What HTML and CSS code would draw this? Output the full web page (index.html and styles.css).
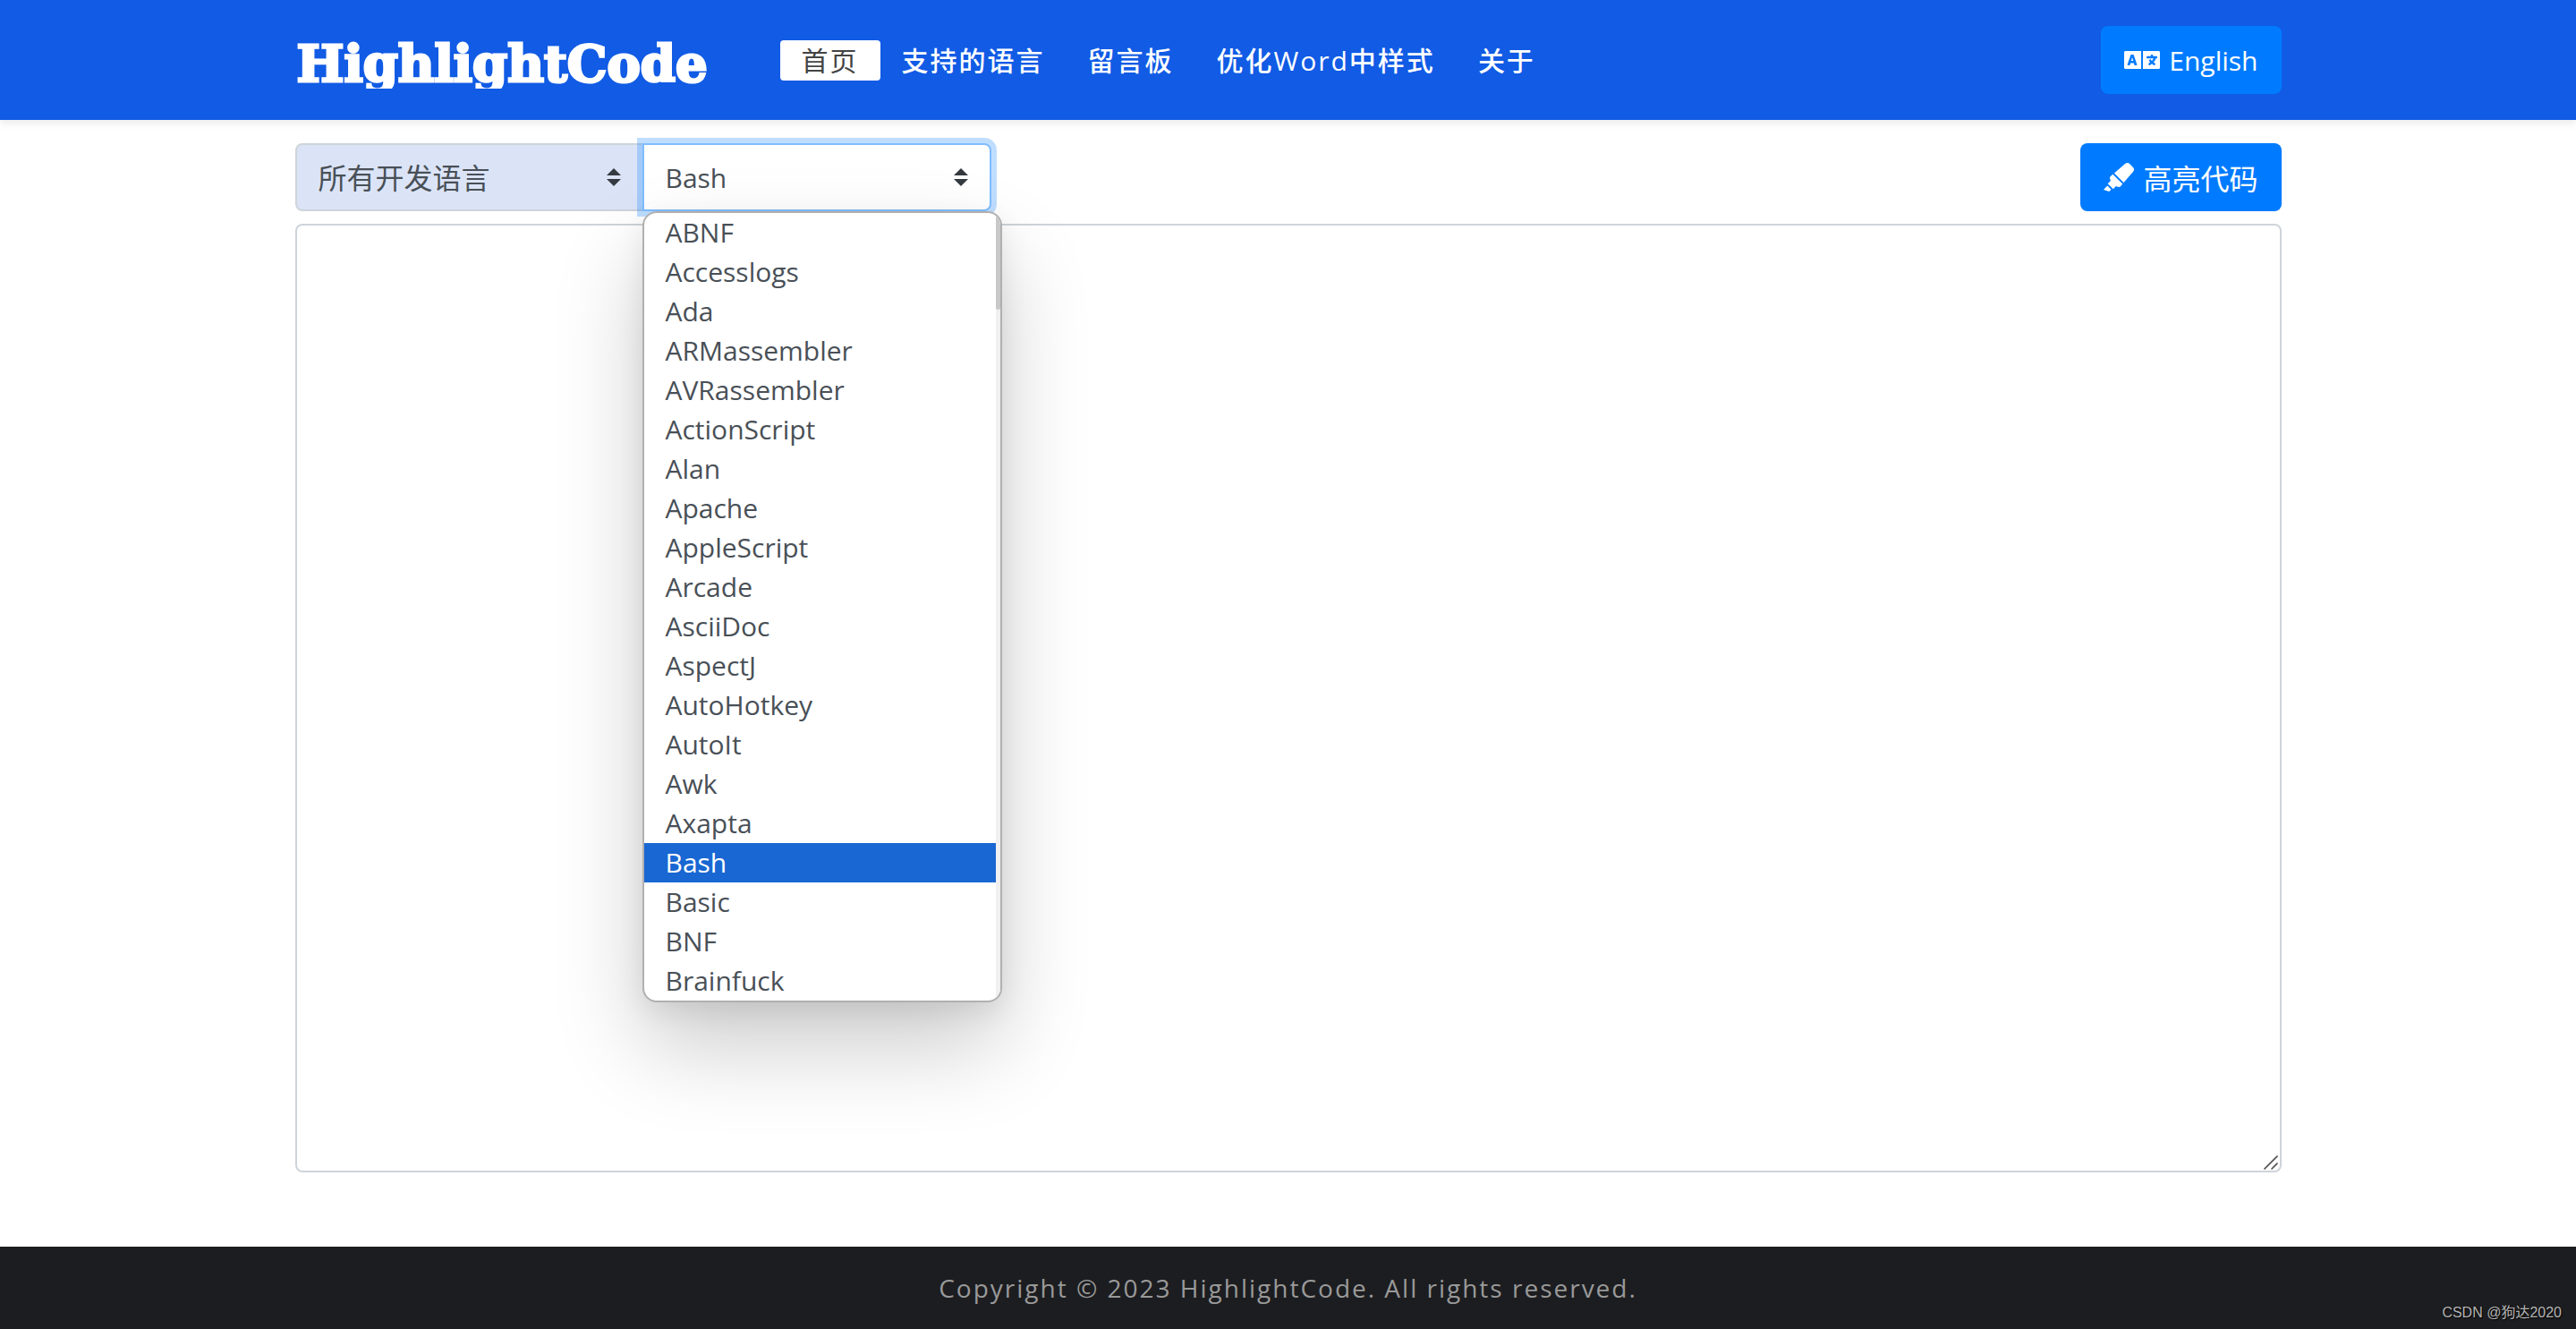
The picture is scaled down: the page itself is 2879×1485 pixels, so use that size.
FILE: index.html
```html
<!DOCTYPE html>
<html lang="zh-CN">
<head>
    <meta charset="UTF-8">
    <meta name="viewport" content="width=device-width, initial-scale=1.0">
    <title>HighlightCode</title>
    <link rel="stylesheet" href="styles.css">
</head>
<body>
    <header class="header">
        <div class="container header-inner">
            <a class="brand" href="#">HighlightCode</a>
            <nav class="nav">
                <a class="nav-link active" href="#">首页</a>
                <a class="nav-link" href="#">支持的语言</a>
                <a class="nav-link" href="#">留言板</a>
                <a class="nav-link" href="#">优化Word中样式</a>
                <a class="nav-link" href="#">关于</a>
            </nav>
            <button class="btn btn-language" type="button">
                <svg class="icon-language" viewBox="0 0 640 512" aria-hidden="true"><path fill="currentColor" d="M152.1 236.2c-3.5-12.1-7.8-33.2-7.8-33.2h-.5s-4.3 21.1-7.8 33.2l-11.1 37.5H163zM616 96H336v320h280c13.3 0 24-10.7 24-24V120c0-13.3-10.7-24-24-24zm-24 120c0 6.6-5.4 12-12 12h-11.4c-6.9 23.6-21.7 47.4-42.7 69.9 8.4 6.4 17.1 12.5 26.1 18 5.5 3.4 7.3 10.5 4.1 16.2l-7.9 13.9c-3.4 5.9-10.9 7.8-16.7 4.3-12.6-7.8-24.5-16.1-35.4-24.9-10.9 8.7-22.7 17.1-35.4 24.9-5.8 3.5-13.3 1.6-16.7-4.3l-7.9-13.9c-3.2-5.6-1.4-12.8 4.2-16.2 9.3-5.7 18-11.7 26.1-18-7.9-8.4-14.9-17-21-25.7-4-5.7-2.2-13.6 3.7-17.1l6.5-3.9 7.3-4.3c5.4-3.2 12.4-1.7 16 3.4 5 7 10.8 14 17.4 20.9 13.5-14.2 23.8-28.9 30-43.2H412c-6.6 0-12-5.4-12-12v-16c0-6.6 5.4-12 12-12h64v-16c0-6.6 5.4-12 12-12h16c6.6 0 12 5.4 12 12v16h64c6.6 0 12 5.4 12 12zM0 120v272c0 13.3 10.7 24 24 24h280V96H24c-13.3 0-24 10.7-24 24zm58.9 216.1L116.4 167c1.7-4.9 6.2-8.1 11.4-8.1h32.5c5.1 0 9.7 3.3 11.4 8.1l57.5 169.1c2.6 7.8-3.1 15.9-11.4 15.9h-22.9a12 12 0 0 1-11.5-8.6l-9.4-31.9h-60.2l-9.1 31.8c-1.5 5.1-6.2 8.7-11.5 8.7H70.3c-8.2 0-14-8.1-11.4-15.9z"/></svg>
                English
            </button>
        </div>
    </header>

    <main class="container main">
        <div class="toolbar">
            <div class="select-group">
                <select class="custom-select group-select" aria-label="语言分类">
                    <option>所有开发语言</option>
                </select>
                <div class="language">
                    <select class="custom-select language-select focus" aria-label="开发语言">
                        <option>Bash</option>
                    </select>
                    <div class="dropdown">
                        <ul class="option-list" role="listbox" aria-label="开发语言">
                            <li role="option">ABNF</li>
                            <li role="option">Accesslogs</li>
                            <li role="option">Ada</li>
                            <li role="option">ARMassembler</li>
                            <li role="option">AVRassembler</li>
                            <li role="option">ActionScript</li>
                            <li role="option">Alan</li>
                            <li role="option">Apache</li>
                            <li role="option">AppleScript</li>
                            <li role="option">Arcade</li>
                            <li role="option">AsciiDoc</li>
                            <li role="option">AspectJ</li>
                            <li role="option">AutoHotkey</li>
                            <li role="option">AutoIt</li>
                            <li role="option">Awk</li>
                            <li role="option">Axapta</li>
                            <li role="option" class="selected" aria-selected="true">Bash</li>
                            <li role="option">Basic</li>
                            <li role="option">BNF</li>
                            <li role="option">Brainfuck</li>
                        </ul>
                        <div class="scrollbar"><div class="thumb"></div></div>
                    </div>
                </div>
            </div>
            <button class="btn" type="button">
                <svg class="icon-highlighter" viewBox="0 0 544 512" aria-hidden="true"><path fill="currentColor" d="M0 479.98L99.92 512l35.45-35.45-67.04-67.04L0 479.98zm124.61-240.01a36.592 36.592 0 0 0-10.79 38.1l13.05 42.83-50.93 50.94 96.23 96.23 50.86-50.86 42.74 13.08c13.73 4.2 28.65-.01 38.15-10.78l35.55-41.64-173.34-173.34-41.52 35.44zm403.31-160.7l-63.2-63.2c-20.49-20.49-53.38-21.52-75.12-2.35L190.55 183.68l169.77 169.78L530.27 154.4c19.18-21.74 18.15-54.63-2.35-75.13z"/></svg>
                高亮代码
            </button>
        </div>
        <div class="editor">
            <textarea class="code" aria-label="代码"></textarea>
            <svg class="grip" viewBox="0 0 16 16" aria-hidden="true"><path d="M0.5 15.5L15.5 0.5M8.5 15.5L15.5 8.5" stroke="#555" stroke-width="1.6" fill="none"/></svg>
        </div>
    </main>

    <footer class="footer">
        <p class="copyright">Copyright © 2023 HighlightCode. All rights reserved.</p>
        <span class="watermark">CSDN @狗达2020</span>
    </footer>
</body>
</html>
```

FILE: styles.css
```css
* {
    box-sizing: border-box;
}

body {
    margin: 0;
    min-height: 100vh;
    display: flex;
    flex-direction: column;
    background: #fff;
    color: #495057;
    font-family: "Open Sans", "Noto Sans CJK SC", sans-serif;
    font-size: 30px;
    line-height: 44px;
}

.container {
    width: 100%;
    max-width: 2220px;
    margin: 0 auto;
}

/* header */
.header {
    background: #115be5;
    box-shadow: 0 4px 8px rgba(0, 0, 0, 0.08);
}

.header-inner {
    display: flex;
    align-items: center;
    padding: 29px 0;
}

.brand {
    width: 542px;
    height: 64px;
    padding-left: 2px;
    overflow: hidden;
    color: #fff;
    font-family: "DejaVu Serif", serif;
    font-size: 56px;
    font-weight: bold;
    line-height: 72px;
    text-decoration: none;
    -webkit-text-stroke: 3px #fff;
}

.nav {
    display: flex;
    flex: 1;
}

.nav-link {
    padding: 0 24px;
    border-radius: 4px;
    color: #fff;
    font-weight: 500;
    line-height: 45px;
    letter-spacing: 2px;
    text-decoration: none;
    white-space: nowrap;
}

.nav-link.active {
    background: #fff;
    color: #444;
    font-weight: 400;
}

.btn {
    display: flex;
    align-items: center;
    gap: 10px;
    height: 76px;
    padding: 0 26px;
    border: 0;
    border-radius: 8px;
    background: #007bff;
    color: #fff;
    font-family: inherit;
    font-size: 32px;
    white-space: nowrap;
}

.btn-language {
    font-size: 30px;
}

.icon-language {
    width: 40px;
    height: 32px;
}

.icon-highlighter {
    width: 34px;
    height: 32px;
}

/* content */
.main {
    flex: 1;
    display: flex;
    flex-direction: column;
    gap: 14px;
    padding: 26px 0 83px;
}

.toolbar {
    display: flex;
    justify-content: space-between;
}

.select-group {
    display: flex;
}

.custom-select {
    display: block;
    appearance: none;
    width: 390px;
    height: 76px;
    padding: 0 56px 0 24px;
    border: 2px solid #ced4da;
    color: #495057;
    font-family: inherit;
    font-size: 32px;
    outline: none;
    background: #fff url("data:image/svg+xml,%3csvg xmlns='http://www.w3.org/2000/svg' viewBox='0 0 4 5'%3e%3cpath fill='%23343a40' d='M2 0L0 2h4zm0 5L0 3h4z'/%3e%3c/svg%3e") no-repeat right 24px center / 16px 20px;
}

.group-select {
    border-radius: 8px 0 0 8px;
    background-color: #dbe4f7;
}

.language {
    position: relative;
    margin-left: -2px;
}

.language-select {
    border-radius: 0 8px 8px 0;
    font-size: 30px;
}

.custom-select.focus {
    border-color: #80bdff;
    box-shadow: 0 0 0 6px rgba(0, 123, 255, 0.25);
}

.dropdown {
    position: absolute;
    z-index: 10;
    top: 100%;
    left: 0;
    display: flex;
    width: 402px;
    border: 2px solid #b0b0b0;
    border-radius: 16px;
    overflow: hidden;
    background: #fff;
    box-shadow: 0 50px 100px rgba(0, 0, 0, 0.2), 0 10px 30px rgba(0, 0, 0, 0.08);
}

.option-list {
    flex: 1;
    margin: 0;
    padding: 0;
    list-style: none;
}

.option-list li {
    padding: 0 24px;
    cursor: default;
}

.option-list .selected {
    background: #1967d2;
    color: #fff;
}

.scrollbar {
    width: 5px;
    background: #f0f0f0;
}

.thumb {
    height: 108px;
    border-radius: 0 0 3px 3px;
    background: #c8c8c8;
}

.editor {
    position: relative;
    flex: 1;
    display: flex;
}

.code {
    flex: 1;
    min-height: 400px;
    padding: 12px 24px;
    border: 2px solid #ced4da;
    border-radius: 8px;
    font-family: inherit;
    font-size: 32px;
    outline: none;
    resize: none;
}

.grip {
    position: absolute;
    right: 4px;
    bottom: 3px;
    width: 16px;
    height: 16px;
}

/* footer */
.footer {
    position: relative;
    padding: 24px 0;
    background: #1c1d20;
    text-align: center;
}

.copyright {
    margin: 0;
    color: #999;
    font-size: 28px;
    letter-spacing: 2px;
}

.watermark {
    position: absolute;
    right: 16px;
    bottom: 8px;
    color: #b4b4b4;
    font-family: "Liberation Sans", "Noto Sans CJK SC", sans-serif;
    font-size: 16px;
    line-height: 20px;
    text-shadow: 1px 1px 1px #000;
}
```
